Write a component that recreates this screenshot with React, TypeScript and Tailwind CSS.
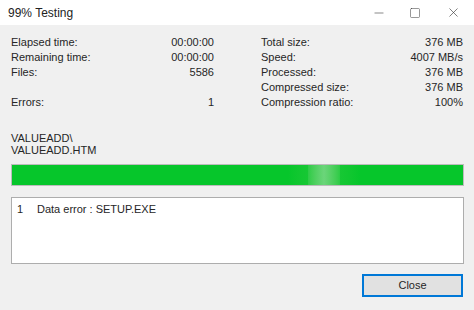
import { Minus, Square, X } from 'lucide-react';

const leftRows: [string, string][] = [
  ['Elapsed time:', '00:00:00'],
  ['Remaining time:', '00:00:00'],
  ['Files:', '5586'],
  ['', ''],
  ['Errors:', '1'],
];

const rightRows: [string, string][] = [
  ['Total size:', '376 MB'],
  ['Speed:', '4007 MB/s'],
  ['Processed:', '376 MB'],
  ['Compressed size:', '376 MB'],
  ['Compression ratio:', '100%'],
];

const StatRows = ({ rows }: { rows: [string, string][] }) => (
  <div className="flex flex-col">
    {rows.map(([label, value], i) => (
      <div key={i} className="flex justify-between items-center h-[15px]">
        <span>{label}</span>
        <span>{value}</span>
      </div>
    ))}
  </div>
);

const App = () => {
  return (
    <div className="w-[474px] h-[310px] bg-[#f0f0f0] flex flex-col text-[11px] text-[#262626] font-['Liberation_Sans',Arial,sans-serif] overflow-hidden">
      {/* Title bar */}
      <div className="h-[25px] bg-white flex items-center justify-between pl-[8px] shrink-0">
        <span className="text-[12px] text-[#222]">99% Testing</span>
        <div className="flex items-center h-full text-[#333]">
          <div className="w-[38px] flex justify-center"><Minus size={14} strokeWidth={1} /></div>
          <div className="w-[34px] flex justify-center"><Square size={12} strokeWidth={1} /></div>
          <div className="w-[42px] flex justify-center"><X size={15} strokeWidth={1} /></div>
        </div>
      </div>

      <div className="flex flex-col px-[11px] pt-[10px]">
        <div className="flex">
          <div className="w-[203px]">
            <StatRows rows={leftRows} />
          </div>
          <div className="w-[47px]" />
          <div className="w-[202px]">
            <StatRows rows={rightRows} />
          </div>
        </div>

        <div className="mt-[22px] leading-[12px]">
          <div>VALUEADD\</div>
          <div>VALUEADD.HTM</div>
        </div>

        {/* Progress bar */}
        <div className="relative mt-[8px] h-[22px] w-[453px] bg-[#06c62b] border border-[#bcbcbc] overflow-hidden">
          <div className="absolute top-0 bottom-0 left-[276px] w-[72px] bg-gradient-to-r from-[#06c62b] via-[#1fc93a] to-[#06c62b]" />
          <div className="absolute top-0 bottom-0 left-[296px] w-[32px] bg-gradient-to-r from-[#2ccb45] via-[#6bd57a] to-[#2ccb45]" />
        </div>

        {/* Error list */}
        <div className="mt-[11px] h-[67px] w-[453px] bg-white border border-[#adadad] px-[5px] pt-[3px]">
          <div className="flex">
            <span className="w-[20px]">1</span>
            <span>Data error : SETUP.EXE</span>
          </div>
        </div>

        <div className="flex justify-end mt-[10px]">
          <button className="w-[101px] h-[23px] bg-[#e1e1e1] border-2 border-[#0078d7] text-[11px] text-[#262626]">
            Close
          </button>
        </div>
      </div>
    </div>
  );
};

export default App;
